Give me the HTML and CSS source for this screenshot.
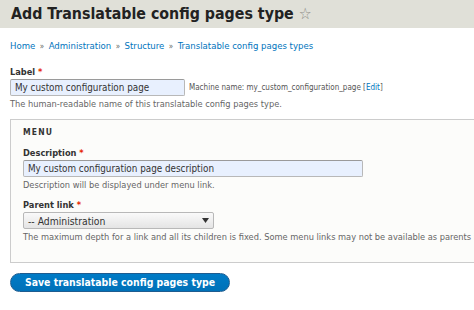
FILE: index.html
```html
<!DOCTYPE html>
<html>
<head>
<meta charset="utf-8">
<link rel="stylesheet" href="styles.css">
</head>
<body>
<div class="header">
  <h1 class="title">Add Translatable config pages type</h1>
  <span class="star">☆</span>
</div>
<div class="content">
  <div class="breadcrumb">
    <a href="#">Home</a><span class="sep">»</span><a href="#">Administration</a><span class="sep">»</span><a href="#">Structure</a><span class="sep">»</span><a href="#">Translatable config pages types</a>
  </div>
  <div class="item item-label">
    <div class="label">Label <span class="req">*</span></div>
    <div class="row">
      <div class="input input-label">My custom configuration page</div>
      <div class="machine">Machine name: my_custom_configuration_page [<a href="#">Edit</a>]</div>
    </div>
    <div class="help">The human-readable name of this translatable config pages type.</div>
  </div>
  <div class="fieldset">
    <div class="legend">MENU</div>
    <div class="item">
      <div class="label">Description <span class="req">*</span></div>
      <div class="input input-desc">My custom configuration page description</div>
      <div class="help">Description will be displayed under menu link.</div>
    </div>
    <div class="item item-parent">
      <div class="label">Parent link <span class="req">*</span></div>
      <div class="select">
        <span>-- Administration</span>
        <svg class="caret" width="7" height="5" viewBox="0 0 7 5"><path d="M0 0H7L3.5 5Z" fill="#333"/></svg>
      </div>
      <div class="help nowrap">The maximum depth for a link and all its children is fixed. Some menu links may not be available as parents if selecting them would exceed this limit.</div>
    </div>
  </div>
  <div class="actions">
    <button class="button">Save translatable config pages type</button>
  </div>
</div>
</body>
</html>
```
FILE: styles.css
```css
html, body {
  margin: 0;
  padding: 0;
  background: #ffffff;
  overflow: hidden;
}
body {
  font-family: "DejaVu Sans Condensed", "DejaVu Sans", sans-serif;
  font-stretch: condensed;
  color: #333333;
  width: 474px;
}
a {
  color: #0074bd;
  text-decoration: none;
}
.header {
  height: 28px;
  background: #e0e0d8;
  display: flex;
  align-items: center;
  padding: 0 11px;
  gap: 5px;
}
.title {
  margin: 0;
  font-size: 15.8px;
  font-weight: bold;
  color: #222222;
  line-height: 20px;
  white-space: nowrap;
}
.star {
  font-size: 16px;
  color: #8f8f88;
  line-height: 20px;
}
.content {
  padding: 0 10px;
}
.breadcrumb {
  margin-top: 12px;
  font-size: 9.5px;
  line-height: 12px;
  white-space: nowrap;
}
.breadcrumb .sep {
  color: #666;
  margin: 0 4.5px;
  font-size: 8px;
}
.item-label {
  margin-top: 12px;
}
.label {
  font-size: 9.2px;
  font-weight: bold;
  color: #333;
  line-height: 13px;
  margin-bottom: 1px;
}
.req {
  color: #e62600;
}
.row {
  display: flex;
  align-items: center;
  gap: 4px;
}
.input {
  box-sizing: border-box;
  height: 17px;
  background: #e8f0fe;
  border: 1px solid #b8b8b8;
  border-top-color: #9a9a9a;
  border-radius: 2px;
  font-size: 9.8px;
  line-height: 15px;
  padding: 0 4px;
  color: #333;
  white-space: nowrap;
}
.input-label {
  width: 175px;
}
.input-desc {
  width: 340px;
}
.machine {
  font-size: 8px;
  color: #555;
  white-space: nowrap;
}
.help {
  font-size: 9.2px;
  color: #666;
  line-height: 11px;
  margin-top: 2px;
  white-space: nowrap;
}
.fieldset {
  margin-top: 10px;
  box-sizing: border-box;
  width: 480px;
  border: 1px solid #ccc;
  background: #fcfcfa;
  padding: 6px 12px 20px 12px;
}
.legend {
  font-size: 8.5px;
  font-weight: bold;
  letter-spacing: 1.2px;
  line-height: 12px;
  color: #333;
  margin-bottom: 8px;
}
.item-parent {
  margin-top: 8px;
}
.select {
  box-sizing: border-box;
  width: 191px;
  height: 17px;
  border: 1px solid #b8b8b8;
  border-radius: 2px;
  background: linear-gradient(#fafafa, #e4e4e4);
  display: flex;
  align-items: center;
  justify-content: space-between;
  padding: 0 4px 0 4px;
  font-size: 10.3px;
  color: #333;
}
.actions {
  margin-top: 8px;
}
.button {
  width: 220px;
  height: 19px;
  border-radius: 10px;
  border: 1px solid #1e5c90;
  background: linear-gradient(#007bc6, #0071b8);
  color: #fff;
  font-family: "DejaVu Sans Condensed", "DejaVu Sans", sans-serif;
  font-stretch: condensed;
  font-weight: bold;
  font-size: 10.4px;
  padding: 0;
  line-height: 17px;
}
```
